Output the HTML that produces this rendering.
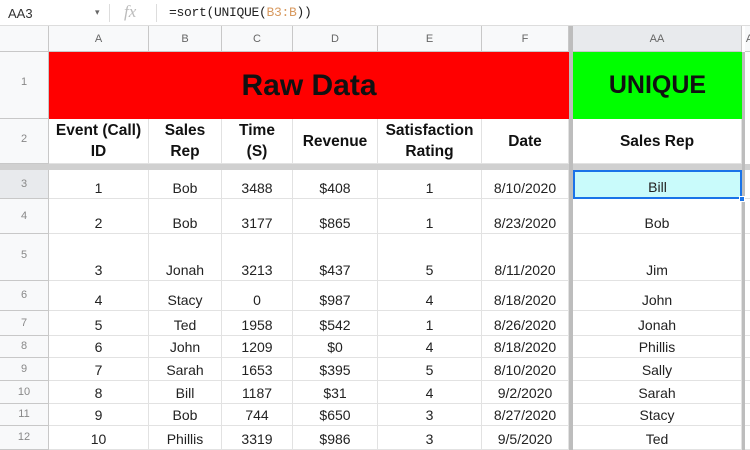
<!DOCTYPE html>
<html><head><meta charset="utf-8"><style>
*{margin:0;padding:0;box-sizing:border-box}
body{width:750px;height:450px;overflow:hidden;background:#fff;font-family:"Liberation Sans",Arial,sans-serif;position:relative}
.a{position:absolute}
.c{position:absolute;display:flex;align-items:flex-end;justify-content:center;padding-bottom:2px;font-size:14px;color:#222;border-right:1px solid #e2e2e2;border-bottom:1px solid #e2e2e2}
.h{position:absolute;display:flex;align-items:center;justify-content:center;font-size:11px;color:#666;background:#f8f9fa;border-right:1px solid #c8c8c8;border-bottom:1px solid #c8c8c8}
.rn{position:absolute;left:0;width:49px;display:flex;justify-content:center;padding-top:7px;font-size:11px;color:#888;background:#f8f9fa;border-right:1px solid #c8c8c8;border-bottom:1px solid #c8c8c8}
.b{position:absolute;display:flex;align-items:center;justify-content:center;text-align:center;font-weight:bold;font-size:15.5px;color:#111;line-height:21px;border-right:1px solid #e2e2e2;border-bottom:1px solid #e2e2e2}
</style></head><body>
<div class="a" style="left:0;top:0;width:750px;height:26px;border-bottom:1px solid #ddd;background:#fff"></div>
<div class="a" style="left:8px;top:6px;font-size:13px;color:#333">AA3</div>
<div class="a" style="left:95px;top:7px;font-size:9px;color:#666">▾</div>
<div class="a" style="left:109px;top:4px;width:1px;height:18px;background:#ddd"></div>
<div class="a" style="left:124px;top:2px;font-size:17px;color:#bbb;font-style:italic;font-family:'Liberation Serif',serif">fx</div>
<div class="a" style="left:156px;top:4px;width:1px;height:18px;background:#ddd"></div>
<div class="a" style="left:169px;top:5px;font-size:13px;color:#222;font-family:'Liberation Mono',monospace;letter-spacing:-0.3px">=sort(UNIQUE(<span style="color:#d89a60">B3:B</span>))</div>

<div class="h" style="left:0;top:26px;width:49px;height:26px"></div>
<div class="h" style="left:49px;top:26px;width:100px;height:26px">A</div>
<div class="h" style="left:149px;top:26px;width:73px;height:26px">B</div>
<div class="h" style="left:222px;top:26px;width:71px;height:26px">C</div>
<div class="h" style="left:293px;top:26px;width:85px;height:26px">D</div>
<div class="h" style="left:378px;top:26px;width:104px;height:26px">E</div>
<div class="h" style="left:482px;top:26px;width:87px;height:26px">F</div>
<div class="h" style="left:573px;top:26px;width:169px;height:26px;background:#e8eaed">AA</div>
<div class="h" style="left:745px;top:26px;width:10px;height:26px">A</div>

<div class="rn" style="top:52px;height:67px;padding-top:24px">1</div>
<div class="rn" style="top:119px;height:45px;padding-top:14px">2</div>
<div class="a" style="left:0;top:164px;width:750px;height:6px;background:#d0d0d0"></div>
<div class="a" style="left:569px;top:26px;width:4px;height:424px;background:#bdbdbd"></div>
<div class="a" style="left:742px;top:52px;width:3px;height:398px;background:#bdbdbd"></div>

<div class="a" style="left:49px;top:52px;width:520px;height:67px;background:#ff0000;display:flex;align-items:center;justify-content:center;font-weight:bold;font-size:30px;color:#111">Raw Data</div>
<div class="a" style="left:573px;top:52px;width:169px;height:67px;background:#00ff00;display:flex;align-items:center;justify-content:center;font-weight:bold;font-size:25px;color:#111">UNIQUE</div>

<div class="b" style="left:49px;top:119px;width:100px;height:45px">Event (Call)<br>ID</div>
<div class="b" style="left:149px;top:119px;width:73px;height:45px">Sales<br>Rep</div>
<div class="b" style="left:222px;top:119px;width:71px;height:45px">Time<br>(S)</div>
<div class="b" style="left:293px;top:119px;width:85px;height:45px">Revenue</div>
<div class="b" style="left:378px;top:119px;width:104px;height:45px">Satisfaction<br>Rating</div>
<div class="b" style="left:482px;top:119px;width:87px;height:45px">Date</div>
<div class="b" style="left:573px;top:119px;width:169px;height:45px">Sales Rep</div>

<div id="g"></div>
<script>
var rows=[[170,199],[199,234],[234,281],[281,311],[311,336],[336,358],[358,381],[381,404],[404,426],[426,450]];
var d=[["1","Bob","3488","$408","1","8/10/2020","Bill"],["2","Bob","3177","$865","1","8/23/2020","Bob"],["3","Jonah","3213","$437","5","8/11/2020","Jim"],["4","Stacy","0","$987","4","8/18/2020","John"],["5","Ted","1958","$542","1","8/26/2020","Jonah"],["6","John","1209","$0","4","8/18/2020","Phillis"],["7","Sarah","1653","$395","5","8/10/2020","Sally"],["8","Bill","1187","$31","4","9/2/2020","Sarah"],["9","Bob","744","$650","3","8/27/2020","Stacy"],["10","Phillis","3319","$986","3","9/5/2020","Ted"]];
var cols=[[49,100],[149,73],[222,71],[293,85],[378,104],[482,87],[573,169]];
var h="";
rows.forEach(function(r,i){var t=r[0],ht=r[1]-r[0];
h+='<div class="rn" style="top:'+t+'px;height:'+ht+'px;padding-top:'+Math.max(3,Math.min(15,(ht-14)/2))+'px;'+(i==0?'background:#e8eaed;':'')+'">'+(i+3)+'</div>';
cols.forEach(function(c,j){h+='<div class="c" style="left:'+c[0]+'px;top:'+t+'px;width:'+c[1]+'px;height:'+ht+'px;'+(i==0&&j==6?'background:#c9fbfb;border:2px solid #1a73e8;':'')+'">'+d[i][j]+'</div>';});
h+='<div class="c" style="left:745px;top:'+t+'px;width:10px;height:'+ht+'px"></div>';});
h+='<div class="a" style="left:739px;top:196px;width:6px;height:6px;background:#1a73e8;border:1px solid #fff"></div>';
document.getElementById("g").innerHTML=h;
</script>
</body></html>
